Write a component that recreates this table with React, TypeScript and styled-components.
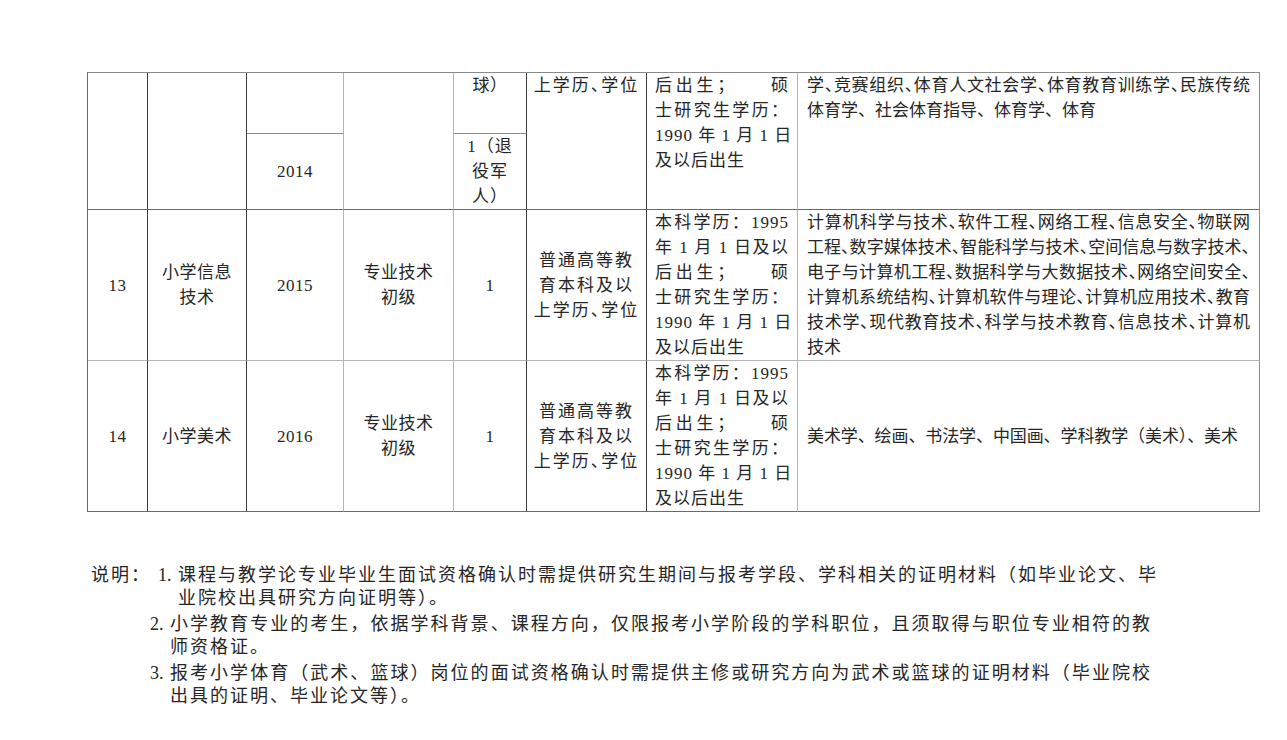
import React from 'react';
import styled, { createGlobalStyle } from 'styled-components';

const GlobalStyle = createGlobalStyle`
    html, body {
        margin: 0;
        padding: 0;
        background: #ffffff;
    }
    body {
        font-family: "Liberation Serif", "Noto Sans CJK SC", serif;
        color: #262626;
    }
`;

const DARK = '#3c3c3c';
const MID = '#6a6a6a';
const LIGHT = '#b4b4b4';

// right border colour of each column, left to right
const colLines = [DARK, DARK, LIGHT, LIGHT, DARK, DARK, LIGHT, '#8a8a8a'];
const colWidths = [60, 99, 97, 110, 73, 120, 151, 462];

const Page = styled.div`
    padding: 72px 0 0 87px;
    width: 1200px;
`;

const Sheet = styled.table`
    width: 1172px;
    table-layout: fixed;
    border-collapse: separate;
    border-spacing: 0;
    border-top: 1px solid #8a8a8a;
    border-left: 1px solid ${MID};
    font-size: 17px;
    line-height: 25px;
`;

const Row = styled.tr<{ $h: number }>`
    height: ${(p) => p.$h}px;
`;

const Cell = styled.td<{ $col: number; $bottom: string; $top?: boolean; $left?: boolean; $pad?: number }>`
    border-right: 1px solid ${(p) => colLines[p.$col]};
    border-bottom: 1px solid ${(p) => p.$bottom};
    padding: 0 ${(p) => p.$pad ?? 4}px;
    text-align: ${(p) => (p.$left ? 'left' : 'center')};
    vertical-align: ${(p) => (p.$top ? 'top' : 'middle')};
    letter-spacing: 0.5px;
    overflow: hidden;
`;

const Line = styled.div<{ $full?: boolean; $space?: number; $halt?: boolean }>`
    white-space: nowrap;
    text-align: ${(p) => (p.$full ? 'justify' : 'inherit')};
    text-align-last: ${(p) => (p.$full ? 'justify' : 'auto')};
    letter-spacing: ${(p) => p.$space ?? 0.5}px;
    font-feature-settings: ${(p) => (p.$halt ? '"halt"' : 'normal')};
`;

const Notes = styled.div`
    display: flex;
    margin: 52px 0 0 4px;
    font-size: 18px;
    line-height: 23px;
    letter-spacing: 2px;
`;

const NoteLabel = styled.div`
    width: 59px;
    flex: none;
    white-space: nowrap;
`;

const NoteList = styled.div`
    display: flex;
    flex-direction: column;
    gap: 3px;
`;

const NoteItem = styled.div`
    display: flex;
`;

const NoteNum = styled.div<{ $shift?: number }>`
    width: 20px;
    box-sizing: border-box;
    padding-left: ${(p) => p.$shift ?? 0}px;
    letter-spacing: 0;
    white-space: nowrap;
    flex: none;
`;

const NoteText = styled.div<{ $indent?: number }>`
    width: 982px;
    text-indent: ${(p) => p.$indent ?? 0}px;
`;

const NoteLine = styled.div<{ $full?: boolean }>`
    white-space: nowrap;
    text-align-last: ${(p) => (p.$full ? 'justify' : 'auto')};
`;

type LinesProps = { lines: string[]; fullUntil?: number; space?: number; halt?: boolean };

// stacks lines; every line before `fullUntil` is spread across the cell width
const Lines: React.FC<LinesProps> = ({ lines, fullUntil = 0, space, halt }) => (
  <>
    {lines.map((l, i) => (
      <Line key={i} $full={i < fullUntil} $space={space} $halt={halt && i < fullUntil}>
        {l}
      </Line>
    ))}
  </>
);

const birthA = ['本科学历：1995', '年 1 月 1 日及以', '后出生；　　硕', '士研究生学历：', '1990 年 1 月 1 日', '及以后出生'];

const sport = ['学、竞赛组织、体育人文社会学、体育教育训练学、民族传统', '体育学、社会体育指导、体育学、体育'];

const infoTech = [
  '计算机科学与技术、软件工程、网络工程、信息安全、物联网',
  '工程、数字媒体技术、智能科学与技术、空间信息与数字技术、',
  '电子与计算机工程、数据科学与大数据技术、网络空间安全、',
  '计算机系统结构、计算机软件与理论、计算机应用技术、教育',
  '技术学、现代教育技术、科学与技术教育、信息技术、计算机',
  '技术',
];

const level = ['专业技术', '初级'];

const notes = [
  {
    num: '1.',
    lines: ['课程与教学论专业毕业生面试资格确认时需提供研究生期间与报考学段、学科相关的证明材料（如毕业论文、毕', '业院校出具研究方向证明等）。'],
  },
  {
    num: '2.',
    lines: ['小学教育专业的考生，依据学科背景、课程方向，仅限报考小学阶段的学科职位，且须取得与职位专业相符的教', '师资格证。'],
  },
  {
    num: '3.',
    lines: ['报考小学体育（武术、篮球）岗位的面试资格确认时需提供主修或研究方向为武术或篮球的证明材料（毕业院校', '出具的证明、毕业论文等）。'],
  },
];

const Degree: React.FC = () => (
  <>
    <Line $space={2}>普通高等教</Line>
    <Line $space={2}>育本科及以</Line>
    <Line $space={2} $halt>
      上学历、学位
    </Line>
  </>
);

const App: React.FC = () => {
  return (
    <Page>
      <GlobalStyle />
      <Sheet>
        <colgroup>
          {colWidths.map((w, i) => (
            <col key={i} style={{ width: w }} />
          ))}
        </colgroup>
        <tbody>
          <Row $h={61}>
            <Cell $col={0} $bottom={MID} rowSpan={2} />
            <Cell $col={1} $bottom={MID} rowSpan={2} />
            <Cell $col={2} $bottom="#8c8c8c" />
            <Cell $col={3} $bottom={MID} rowSpan={2} />
            <Cell $col={4} $bottom="#8c8c8c" $top>
              <Line>球）</Line>
            </Cell>
            <Cell $col={5} $bottom={MID} rowSpan={2} $top>
              <Line $halt $space={2}>上学历、学位</Line>
            </Cell>
            <Cell $col={6} $bottom={MID} rowSpan={2} $top $left $pad={8}>
              <Lines lines={birthA.slice(2)} fullUntil={3} space={1} />
            </Cell>
            <Cell $col={7} $bottom={MID} rowSpan={2} $top $left $pad={9}>
              <Lines lines={sport} fullUntil={1} space={0} halt />
            </Cell>
          </Row>
          <Row $h={74}>
            <Cell $col={2} $bottom={MID}>2014</Cell>
            <Cell $col={4} $bottom={MID} $top>
              <Lines lines={['1（退', '役军', '人）']} space={1} />
            </Cell>
          </Row>
          <Row $h={150}>
            <Cell $col={0} $bottom={LIGHT}>13</Cell>
            <Cell $col={1} $bottom={LIGHT}>
              <Lines lines={['小学信息', '技术']} />
            </Cell>
            <Cell $col={2} $bottom={LIGHT}>2015</Cell>
            <Cell $col={3} $bottom={LIGHT}>
              <Lines lines={level} />
            </Cell>
            <Cell $col={4} $bottom={LIGHT}>1</Cell>
            <Cell $col={5} $bottom={LIGHT}>
              <Degree />
            </Cell>
            <Cell $col={6} $bottom={LIGHT} $top $left $pad={8}>
              <Lines lines={birthA} fullUntil={5} space={1} />
            </Cell>
            <Cell $col={7} $bottom={LIGHT} $top $left $pad={9}>
              <Lines lines={infoTech} fullUntil={5} space={0} halt />
            </Cell>
          </Row>
          <Row $h={151}>
            <Cell $col={0} $bottom={MID}>14</Cell>
            <Cell $col={1} $bottom={MID}>小学美术</Cell>
            <Cell $col={2} $bottom={MID}>2016</Cell>
            <Cell $col={3} $bottom={MID}>
              <Lines lines={level} />
            </Cell>
            <Cell $col={4} $bottom={MID}>1</Cell>
            <Cell $col={5} $bottom={MID}>
              <Degree />
            </Cell>
            <Cell $col={6} $bottom={MID} $top $left $pad={8}>
              <Lines lines={birthA} fullUntil={5} space={1} />
            </Cell>
            <Cell $col={7} $bottom={MID} $left $pad={9}>
              <Line $space={-0.1}>美术学、绘画、书法学、中国画、学科教学（美术）、美术</Line>
            </Cell>
          </Row>
        </tbody>
      </Sheet>
      <Notes>
        <NoteLabel>说明：</NoteLabel>
        <NoteList>
          {notes.map((n, i) => (
            <NoteItem key={n.num}>
              <NoteNum $shift={i === 0 ? 8 : 0}>{n.num}</NoteNum>
              <NoteText $indent={i === 0 ? 8 : 0}>
                {n.lines.map((l, j) => (
                  <NoteLine key={j} $full={j < n.lines.length - 1}>
                    {l}
                  </NoteLine>
                ))}
              </NoteText>
            </NoteItem>
          ))}
        </NoteList>
      </Notes>
    </Page>
  );
};

export default App;
